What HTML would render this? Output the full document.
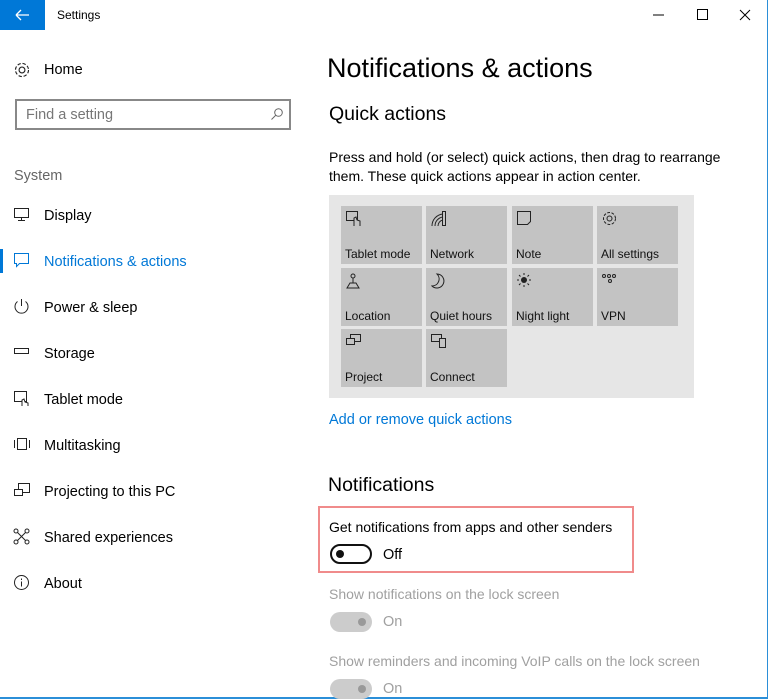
<!DOCTYPE html>
<html><head><style>
*{margin:0;padding:0;box-sizing:border-box}
body{width:768px;height:699px;background:#fff;font-family:"Liberation Sans",sans-serif;color:#000;position:relative;overflow:hidden}
.a{position:absolute;white-space:nowrap}
.back{left:0;top:0;width:45px;height:30px;background:#0078d7}
.nav{font-size:14.5px;left:44px}
.ic{position:absolute;left:13px}
.tile{position:absolute;width:81px;height:58px;background:#c3c3c3}
.tile span{position:absolute;left:4px;bottom:3px;font-size:12px;color:#111}
.tile svg{position:absolute;left:5px;top:5px}
.g{color:#a0a0a0}
</style></head><body>
<div class="a back"><svg width="45" height="30"><path d="M16 15h13M16 15l5-5M16 15l5 5" stroke="#fff" stroke-width="1.3" fill="none"/></svg></div>
<div class="a" style="left:57px;top:8px;font-size:12px">Settings</div>
<svg class="a" style="left:650px;top:8px" width="110" height="14"><path d="M3 7h11" stroke="#000"/><rect x="47.5" y="1.5" width="10" height="10" fill="none" stroke="#000"/><path d="M90 2l10 10M100 2l-10 10" stroke="#000"/></svg>
<div style="position:absolute;right:0;top:0;width:1px;height:699px;background:#2b8fd8"></div>
<div style="position:absolute;left:0;bottom:0;width:768px;height:2px;background:#2b8fd8"></div>

<svg class="ic" style="top:61px" width="18" height="18" viewBox="0 0 16 16"><circle cx="8" cy="8" r="2.6" fill="none" stroke="#222"/><circle cx="8" cy="8" r="5.8" fill="none" stroke="#222" stroke-dasharray="3 1.6"/></svg>
<div class="a nav" style="top:62px">Home</div>
<div class="a" style="left:15px;top:99px;width:276px;height:31px;border:2px solid #888"></div>
<div class="a" style="left:26px;top:107px;font-size:14.5px;color:#777">Find a setting</div>
<svg class="a" style="left:270px;top:107px" width="14" height="14"><circle cx="8.5" cy="5.5" r="3.8" fill="none" stroke="#666"/><path d="M6 8l-4.5 4.5" stroke="#666"/></svg>
<div class="a" style="left:14px;top:168px;font-size:14.5px;color:#666">System</div>

<svg class="ic" style="top:207px" width="17" height="15"><rect x="1.5" y="1.5" width="14" height="9" fill="none" stroke="#222"/><path d="M5 13.5h7M8.5 11v2" stroke="#222"/></svg>
<div class="a nav" style="top:208px">Display</div>
<div class="a" style="left:0;top:249px;width:3px;height:24px;background:#0078d7"></div>
<svg class="ic" style="top:252px" width="18" height="18"><path d="M1.5 1.5h14v10h-9l-3 3v-3h-2z" fill="none" stroke="#0078d7"/></svg>
<div class="a nav" style="top:254px;color:#0078d7">Notifications &amp; actions</div>
<svg class="ic" style="top:298px" width="17" height="17"><path d="M4.5 3.5a6.5 6.5 0 1 0 8 0M8.5 1v7" fill="none" stroke="#222"/></svg>
<div class="a nav" style="top:300px">Power &amp; sleep</div>
<svg class="ic" style="top:346px" width="17" height="10"><rect x="1.5" y="2.5" width="14" height="5" fill="none" stroke="#222"/></svg>
<div class="a nav" style="top:346px">Storage</div>
<svg class="ic" style="top:390px" width="18" height="17"><rect x="1.5" y="1.5" width="12" height="10" fill="none" stroke="#222"/><path d="M9 16v-6l2-1 1 3 3 1v3" fill="#fff" stroke="#222"/></svg>
<div class="a nav" style="top:392px">Tablet mode</div>
<svg class="ic" style="top:436px" width="18" height="16"><rect x="4.5" y="2.5" width="9" height="11" fill="none" stroke="#222"/><path d="M1.5 4v8M16.5 4v8" stroke="#222"/></svg>
<div class="a nav" style="top:438px">Multitasking</div>
<svg class="ic" style="top:482px" width="18" height="17"><rect x="5.5" y="1.5" width="11" height="9" fill="none" stroke="#222"/><rect x="1.5" y="7.5" width="8" height="6" fill="#fff" stroke="#222"/></svg>
<div class="a nav" style="top:484px">Projecting to this PC</div>
<svg class="ic" style="top:528px" width="17" height="17"><circle cx="3" cy="3" r="2" fill="none" stroke="#222"/><circle cx="14" cy="3" r="2" fill="none" stroke="#222"/><circle cx="3" cy="14" r="2" fill="none" stroke="#222"/><circle cx="14" cy="14" r="2" fill="none" stroke="#222"/><path d="M4.5 4.5l8 8M12.5 4.5l-8 8" stroke="#222"/></svg>
<div class="a nav" style="top:530px">Shared experiences</div>
<svg class="ic" style="top:574px" width="17" height="17"><circle cx="8.5" cy="8.5" r="7" fill="none" stroke="#222"/><path d="M8.5 7.5v5M8.5 4.5v1.5" stroke="#222"/></svg>
<div class="a nav" style="top:576px">About</div>

<div class="a" style="left:327px;top:53px;font-size:27px">Notifications &amp; actions</div>
<div class="a" style="left:329px;top:103px;font-size:19.5px">Quick actions</div>
<div class="a" style="left:329px;top:148px;font-size:14px;line-height:19px">Press and hold (or select) quick actions, then drag to rearrange<br>them. These quick actions appear in action center.</div>
<div class="a" style="left:329px;top:195px;width:365px;height:203px;background:#e6e6e6"></div>
<div class="tile" style="left:341px;top:206px"><svg width="16" height="16"><rect x="0.5" y="0.5" width="11" height="9" fill="none" stroke="#222"/><path d="M8 15V7l2-1 1 3 3 1v5" fill="#c3c3c3" stroke="#222"/></svg><span>Tablet mode</span></div>
<div class="tile" style="left:426px;top:206px"><svg width="16" height="16"><path d="M1 15a12 12 0 0 1 11-12M4 15a9 9 0 0 1 8-9M7 15a6 6 0 0 1 5-6" fill="none" stroke="#222"/><rect x="11.5" y="0.5" width="3" height="14" fill="none" stroke="#222"/></svg><span>Network</span></div>
<div class="tile" style="left:512px;top:206px"><svg width="16" height="16"><path d="M0.5 0.5h13v10l-3 3h-10z" fill="none" stroke="#222"/></svg><span>Note</span></div>
<div class="tile" style="left:597px;top:206px"><svg width="16" height="16"><circle cx="7.5" cy="7.5" r="2.5" fill="none" stroke="#222"/><circle cx="7.5" cy="7.5" r="6" fill="none" stroke="#222" stroke-dasharray="2.8 1.5"/></svg><span>All settings</span></div>
<div class="tile" style="left:341px;top:268px"><svg width="16" height="16"><circle cx="7" cy="3" r="2" fill="none" stroke="#222"/><path d="M7 5v5M1 15l3-5h6l3 5z" fill="none" stroke="#222"/></svg><span>Location</span></div>
<div class="tile" style="left:426px;top:268px"><svg width="16" height="16"><path d="M6 1a7 7 0 1 1-5 12 7 7 0 0 0 5-12z" fill="none" stroke="#222"/></svg><span>Quiet hours</span></div>
<div class="tile" style="left:512px;top:268px"><svg width="16" height="16"><circle cx="7" cy="7" r="3" fill="#222"/><path d="M7 0v2M7 12v2M0 7h2M12 7h2M2 2l1.5 1.5M10.5 10.5L12 12M2 12l1.5-1.5M10.5 3.5L12 2" stroke="#222"/></svg><span>Night light</span></div>
<div class="tile" style="left:597px;top:268px"><svg width="18" height="12"><circle cx="2" cy="3" r="1.5" fill="none" stroke="#222"/><circle cx="7" cy="3" r="1.5" fill="none" stroke="#222"/><circle cx="12" cy="3" r="1.5" fill="none" stroke="#222"/><circle cx="8" cy="8" r="1.5" fill="none" stroke="#222"/></svg><span>VPN</span></div>
<div class="tile" style="left:341px;top:329px"><svg width="16" height="14"><rect x="4.5" y="0.5" width="10" height="7" fill="none" stroke="#222"/><rect x="0.5" y="4.5" width="8" height="6" fill="#c3c3c3" stroke="#222"/></svg><span>Project</span></div>
<div class="tile" style="left:426px;top:329px"><svg width="16" height="14"><rect x="0.5" y="0.5" width="10" height="7" fill="none" stroke="#222"/><rect x="8.5" y="4.5" width="6" height="9" fill="#c3c3c3" stroke="#222"/></svg><span>Connect</span></div>
<div class="a" style="left:329px;top:412px;font-size:14.5px;color:#0078d7">Add or remove quick actions</div>

<div class="a" style="left:328px;top:474px;font-size:19.5px">Notifications</div>
<div class="a" style="left:318px;top:506px;width:316px;height:67px;border:2px solid #f08b8b"></div>
<div class="a" style="left:329px;top:519px;font-size:14px">Get notifications from apps and other senders</div>
<div class="a" style="left:330px;top:544px;width:42px;height:20px;border:2px solid #111;border-radius:10px"></div>
<div class="a" style="left:336px;top:550px;width:8px;height:8px;border-radius:50%;background:#111"></div>
<div class="a" style="left:383px;top:547px;font-size:14.5px">Off</div>
<div class="a g" style="left:329px;top:586px;font-size:14px">Show notifications on the lock screen</div>
<div class="a" style="left:330px;top:612px;width:42px;height:20px;border-radius:10px;background:#ccc"></div>
<div class="a" style="left:358px;top:618px;width:8px;height:8px;border-radius:50%;background:#999"></div>
<div class="a g" style="left:383px;top:614px;font-size:14.5px">On</div>
<div class="a g" style="left:329px;top:653px;font-size:14px">Show reminders and incoming VoIP calls on the lock screen</div>
<div class="a" style="left:330px;top:679px;width:42px;height:20px;border-radius:10px;background:#ccc"></div>
<div class="a" style="left:358px;top:685px;width:8px;height:8px;border-radius:50%;background:#999"></div>
<div class="a g" style="left:383px;top:681px;font-size:14.5px">On</div>
</body></html>
